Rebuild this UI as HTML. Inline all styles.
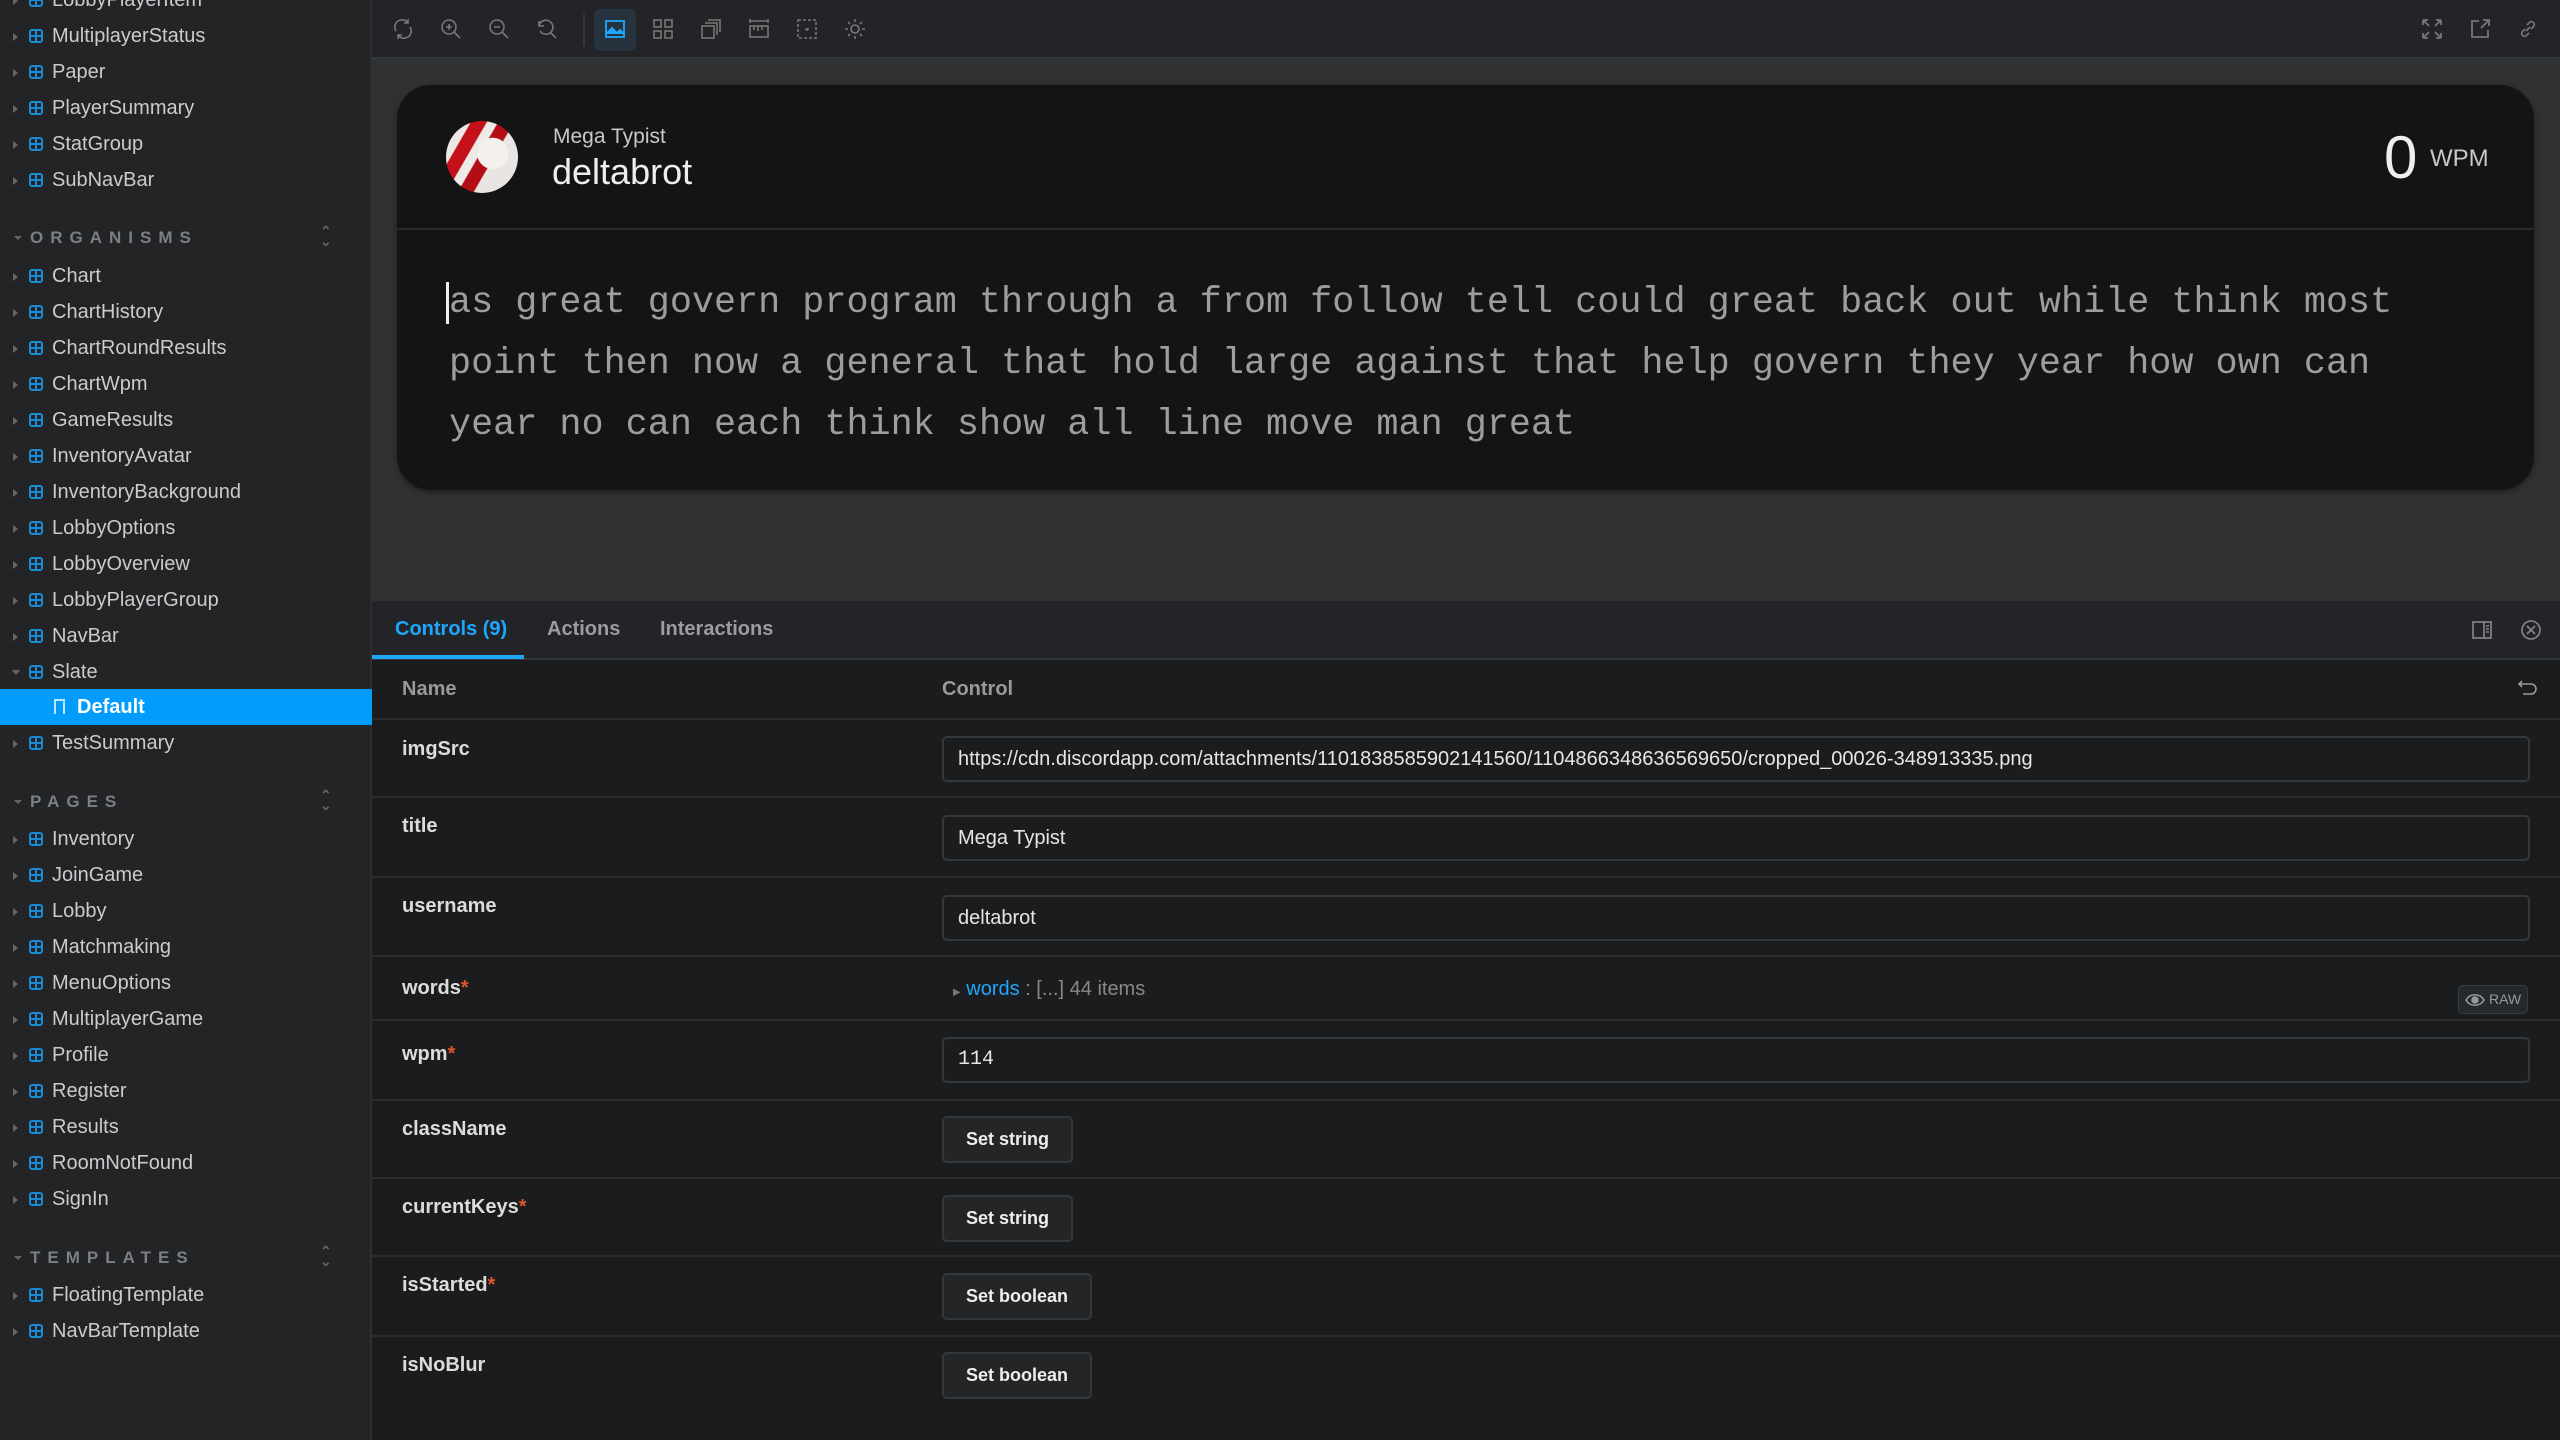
<!DOCTYPE html>
<html><head><meta charset="utf-8"><style>
*{box-sizing:border-box;margin:0;padding:0}
body{width:2560px;height:1440px;overflow:hidden;background:#1b1c1d;font-family:"Liberation Sans",sans-serif;position:relative}
.sb{position:absolute;left:0;top:0;width:372px;height:1440px;background:#222426;border-right:2px solid #2b2d30}
.it{position:absolute;left:0;width:372px;height:36px;line-height:36px;color:#c9cbcd;font-size:20px}
.it .ar{position:absolute;left:13px;top:15px;width:0;height:0;border-left:5px solid #666;border-top:4px solid transparent;border-bottom:4px solid transparent}
.it .ic{position:absolute;left:29px;top:11px;width:14px;height:14px;border:2px solid #1a8ad4;border-radius:3px}
.it .ic:before{content:"";position:absolute;left:4px;top:-2px;width:2px;height:14px;background:#1a8ad4}
.it .ic:after{content:"";position:absolute;top:4px;left:-2px;height:2px;width:14px;background:#1a8ad4}
.it span{position:absolute;left:52px}
.sec{position:absolute;left:30px;font-size:17px;font-weight:bold;letter-spacing:7px;color:#7c7f83}
.sec:before{content:"";position:absolute;left:-16px;top:8px;border-top:4px solid #666;border-left:4px solid transparent;border-right:4px solid transparent}
.sec i{position:absolute;left:290px;top:-2px;color:#666;font-style:normal;font-size:14px;letter-spacing:0;line-height:10px}
.tb{position:absolute;left:372px;top:0;width:2188px;height:59px;background:#222428;border-bottom:2px solid #33363a}
.ti{position:absolute;top:18px;width:22px;height:22px}
.pv{position:absolute;left:372px;top:59px;width:2188px;height:542px;background:#303132}
.card{position:absolute;left:397px;top:85px;width:2137px;height:405px;background:#141414;border-radius:34px;box-shadow:0 2px 6px rgba(0,0,0,.4)}
.tabs{position:absolute;left:372px;top:601px;width:2188px;height:59px;background:#222428;border-bottom:2px solid #33363a;font-size:20px}
.tab{position:absolute;top:17px;color:#9a9c9f;font-weight:bold}
.row{position:absolute;left:372px;width:2188px;border-bottom:2px solid #2a2c2e}
.lb{position:absolute;left:30px;font-size:20px;font-weight:bold;color:#dcdcdc}
.lb b{color:#e0552e}
.inp{position:absolute;left:942px;width:1588px;height:46px;border:2px solid #35383b;border-radius:5px;background:#1b1c1d;color:#e6e6e6;font-size:20px;line-height:42px;padding-left:14px}
.btn{position:absolute;left:942px;height:47px;border:2px solid #35383b;border-radius:5px;background:#232527;color:#eee;font-weight:bold;font-size:18px;line-height:43px;padding:0 22px}
</style></head><body>
<div class="sb">
<div class="it" style="top:-18px"><i class="ar"></i><i class="ic"></i><span>LobbyPlayerItem</span></div>
<div class="it" style="top:18px"><i class="ar"></i><i class="ic"></i><span>MultiplayerStatus</span></div>
<div class="it" style="top:54px"><i class="ar"></i><i class="ic"></i><span>Paper</span></div>
<div class="it" style="top:90px"><i class="ar"></i><i class="ic"></i><span>PlayerSummary</span></div>
<div class="it" style="top:126px"><i class="ar"></i><i class="ic"></i><span>StatGroup</span></div>
<div class="it" style="top:162px"><i class="ar"></i><i class="ic"></i><span>SubNavBar</span></div>
<div class="sec" style="top:228px">ORGANISMS<i>⌃<br>⌄</i></div>
<div class="it" style="top:258px"><i class="ar"></i><i class="ic"></i><span>Chart</span></div>
<div class="it" style="top:294px"><i class="ar"></i><i class="ic"></i><span>ChartHistory</span></div>
<div class="it" style="top:330px"><i class="ar"></i><i class="ic"></i><span>ChartRoundResults</span></div>
<div class="it" style="top:366px"><i class="ar"></i><i class="ic"></i><span>ChartWpm</span></div>
<div class="it" style="top:402px"><i class="ar"></i><i class="ic"></i><span>GameResults</span></div>
<div class="it" style="top:438px"><i class="ar"></i><i class="ic"></i><span>InventoryAvatar</span></div>
<div class="it" style="top:474px"><i class="ar"></i><i class="ic"></i><span>InventoryBackground</span></div>
<div class="it" style="top:510px"><i class="ar"></i><i class="ic"></i><span>LobbyOptions</span></div>
<div class="it" style="top:546px"><i class="ar"></i><i class="ic"></i><span>LobbyOverview</span></div>
<div class="it" style="top:582px"><i class="ar"></i><i class="ic"></i><span>LobbyPlayerGroup</span></div>
<div class="it" style="top:618px"><i class="ar"></i><i class="ic"></i><span>NavBar</span></div>
<div class="it" style="top:654px"><i class="ar" style="border:none;border-top:5px solid #666;border-left:4px solid transparent;border-right:4px solid transparent;top:16px;left:12px"></i><i class="ic"></i><span>Slate</span></div>
<div class="it" style="top:689px;background:#029cfd;color:#fff;font-weight:bold"><i style="position:absolute;left:54px;top:10px;width:11px;height:15px;border:2px solid #bfe6ff;border-bottom:none"></i><span style="left:77px">Default</span></div>
<div class="it" style="top:725px"><i class="ar"></i><i class="ic"></i><span>TestSummary</span></div>
<div class="sec" style="top:792px">PAGES<i>⌃<br>⌄</i></div>
<div class="it" style="top:821px"><i class="ar"></i><i class="ic"></i><span>Inventory</span></div>
<div class="it" style="top:857px"><i class="ar"></i><i class="ic"></i><span>JoinGame</span></div>
<div class="it" style="top:893px"><i class="ar"></i><i class="ic"></i><span>Lobby</span></div>
<div class="it" style="top:929px"><i class="ar"></i><i class="ic"></i><span>Matchmaking</span></div>
<div class="it" style="top:965px"><i class="ar"></i><i class="ic"></i><span>MenuOptions</span></div>
<div class="it" style="top:1001px"><i class="ar"></i><i class="ic"></i><span>MultiplayerGame</span></div>
<div class="it" style="top:1037px"><i class="ar"></i><i class="ic"></i><span>Profile</span></div>
<div class="it" style="top:1073px"><i class="ar"></i><i class="ic"></i><span>Register</span></div>
<div class="it" style="top:1109px"><i class="ar"></i><i class="ic"></i><span>Results</span></div>
<div class="it" style="top:1145px"><i class="ar"></i><i class="ic"></i><span>RoomNotFound</span></div>
<div class="it" style="top:1181px"><i class="ar"></i><i class="ic"></i><span>SignIn</span></div>
<div class="sec" style="top:1248px">TEMPLATES<i>⌃<br>⌄</i></div>
<div class="it" style="top:1277px"><i class="ar"></i><i class="ic"></i><span>FloatingTemplate</span></div>
<div class="it" style="top:1313px"><i class="ar"></i><i class="ic"></i><span>NavBarTemplate</span></div>
</div>

<div class="tb">
<svg class="ti" style="left:20px" viewBox="0 0 22 22" fill="none" stroke="#777" stroke-width="1.6"><path d="M4 13A7 7 0 0 1 16 5M18 9A7 7 0 0 1 6 17M16 1v4h-4M6 21v-4h4"/></svg>
<svg class="ti" style="left:68px" viewBox="0 0 22 22" fill="none" stroke="#777" stroke-width="1.6"><circle cx="9" cy="9" r="7"/><path d="M14 14l6 6M6 9h6M9 6v6"/></svg>
<svg class="ti" style="left:116px" viewBox="0 0 22 22" fill="none" stroke="#777" stroke-width="1.6"><circle cx="9" cy="9" r="7"/><path d="M14 14l6 6M6 9h6"/></svg>
<svg class="ti" style="left:164px" viewBox="0 0 22 22" fill="none" stroke="#777" stroke-width="1.6"><path d="M3 8A7 7 0 1 1 4 13M3 3v5h5M14 14l6 6"/></svg>
<div style="position:absolute;left:211px;top:14px;width:2px;height:32px;background:#33363a"></div>
<div style="position:absolute;left:222px;top:9px;width:42px;height:42px;border-radius:6px;background:#26323d"></div>
<svg class="ti" style="left:232px" viewBox="0 0 22 22" fill="none" stroke="#1ea7fd" stroke-width="1.8"><rect x="2" y="3" width="18" height="16"/><path d="M2 16l6-6 5 5 3-3 4 4" fill="#1ea7fd"/></svg>
<svg class="ti" style="left:280px" viewBox="0 0 22 22" fill="none" stroke="#777" stroke-width="1.6"><rect x="2" y="2" width="7" height="7"/><rect x="13" y="2" width="7" height="7"/><rect x="2" y="13" width="7" height="7"/><rect x="13" y="13" width="7" height="7"/></svg>
<svg class="ti" style="left:328px" viewBox="0 0 22 22" fill="none" stroke="#777" stroke-width="1.6"><rect x="2" y="8" width="12" height="12"/><path d="M5 5h12v12M8 2h12v12"/></svg>
<svg class="ti" style="left:376px" viewBox="0 0 22 22" fill="none" stroke="#777" stroke-width="1.6"><path d="M2 3h18M2 1v4M20 1v4"/><rect x="2" y="8" width="18" height="11"/><path d="M6 8v4M10 8v5M14 8v4"/></svg>
<svg class="ti" style="left:424px" viewBox="0 0 22 22" fill="none" stroke="#777" stroke-width="1.6" stroke-dasharray="3 2"><rect x="2" y="2" width="18" height="18"/><circle cx="11" cy="11" r="1" fill="#777"/></svg>
<svg class="ti" style="left:472px" viewBox="0 0 22 22" fill="none" stroke="#777" stroke-width="1.6"><circle cx="11" cy="11" r="4"/><path d="M11 1v3M11 18v3M1 11h3M18 11h3M4 4l2 2M16 16l2 2M4 18l2-2M16 6l2-2"/></svg>
<svg class="ti" style="left:2049px" viewBox="0 0 22 22" fill="none" stroke="#777" stroke-width="1.8"><path d="M2 2l6 6M20 2l-6 6M2 20l6-6M20 20l-6-6M2 2h5M2 2v5M20 2h-5M20 2v5M2 20h5M2 20v-5M20 20h-5M20 20v-5"/></svg>
<svg class="ti" style="left:2097px" viewBox="0 0 22 22" fill="none" stroke="#777" stroke-width="1.8"><path d="M10 3H3v16h16v-7M12 10l8-8M14 2h6v6"/></svg>
<svg class="ti" style="left:2145px" viewBox="0 0 22 22" fill="none" stroke="#777" stroke-width="1.6"><path d="M9 13l4-4M8 11l-3 3a3 3 0 0 0 4 4l3-3M14 11l3-3a3 3 0 0 0-4-4l-3 3"/></svg>
</div>

<div class="pv">
<div class="card" style="left:25px;top:26px">
<div style="position:absolute;left:49px;top:36px;width:72px;height:72px;border-radius:50%;background:radial-gradient(circle at 65% 45%,#f3f0ee 0 25%,transparent 26%),linear-gradient(120deg,#ece8e6 0 22%,#c4101a 23% 36%,#eeeae8 37% 46%,#b30d16 47% 60%,#e9e5e3 61%)"></div>
<div style="position:absolute;left:156px;top:40px;color:#c8c8c8;font-size:21px">Mega Typist</div>
<div style="position:absolute;left:155px;top:66px;color:#eee;font-size:36px">deltabrot</div>
<div style="position:absolute;left:1987px;top:38px;color:#eee;font-size:60px;line-height:70px">0</div>
<div style="position:absolute;left:2033px;top:60px;color:#c8c8c8;font-size:24px">WPM</div>
<div style="position:absolute;left:0;top:143px;width:2137px;height:2px;background:#2a2a2a"></div>
<div style="position:absolute;left:52px;top:188px;width:1960px;color:#9d9d9d;font-family:'Liberation Mono',monospace;font-size:36.8px;line-height:61px;white-space:pre"><span style="border-left:3px solid #eee;margin-left:-3px"></span>as great govern program through a from follow tell could great back out while think most
point then now a general that hold large against that help govern they year how own can
year no can each think show all line move man great</div>
</div>
</div>

<div class="tabs">
<div class="tab" style="left:23px;color:#1ea7fd">Controls (9)</div>
<div class="tab" style="left:175px">Actions</div>
<div class="tab" style="left:288px">Interactions</div>
<div style="position:absolute;left:0;top:54px;width:152px;height:4px;background:#1ea7fd"></div>
<svg style="position:absolute;left:2100px;top:19px" width="20" height="20" viewBox="0 0 20 20" fill="none" stroke="#888" stroke-width="1.6"><rect x="1" y="2" width="18" height="16"/><path d="M12 2v16M14 6h3M14 9h3M14 12h3"/></svg>
<svg style="position:absolute;left:2148px;top:18px" width="22" height="22" viewBox="0 0 22 22" fill="none" stroke="#888" stroke-width="1.6"><circle cx="11" cy="11" r="9"/><path d="M7 7l8 8M15 7l-8 8"/></svg>
</div>

<div class="row" style="top:660px;height:60px">
<div style="position:absolute;left:30px;top:18px;font-size:20px;font-weight:bold;color:#999">Name</div>
<div style="position:absolute;left:570px;top:18px;font-size:20px;font-weight:bold;color:#999">Control</div>
<svg style="position:absolute;left:2145px;top:18px" width="22" height="20" viewBox="0 0 22 20" fill="none" stroke="#999" stroke-width="1.6"><path d="M5 3L2 6l3 3M2 6h12a5 5 0 0 1 0 10H6"/></svg>
</div>
<div class="row" style="top:720px;height:78px"><div class="lb" style="top:18px">imgSrc</div></div>
<div class="inp" style="top:736px">https://cdn.discordapp.com/attachments/1101838585902141560/1104866348636569650/cropped_00026-348913335.png</div>
<div class="row" style="top:798px;height:80px"><div class="lb" style="top:17px">title</div></div>
<div class="inp" style="top:815px">Mega Typist</div>
<div class="row" style="top:878px;height:79px"><div class="lb" style="top:17px">username</div></div>
<div class="inp" style="top:895px">deltabrot</div>
<div class="row" style="top:957px;height:64px"><div class="lb" style="top:20px">words<b>*</b></div>
<div style="position:absolute;left:581px;top:21px;font-size:20px;color:#888"><span style="font-size:10px;color:#777">▶</span> <span style="color:#1ea7fd">words</span> : [...] 44 items</div>
<div style="position:absolute;left:2086px;top:28px;width:70px;height:29px;border:1px solid #3a3d40;border-radius:5px;background:#26292c;color:#999;font-size:14px;line-height:27px;padding-left:30px">RAW<svg style="position:absolute;left:6px;top:7px" width="20" height="14" viewBox="0 0 20 14" fill="none" stroke="#999" stroke-width="1.5"><path d="M1 7C5 0 15 0 19 7 15 14 5 14 1 7z"/><circle cx="10" cy="7" r="3" fill="#999"/></svg></div>
</div>
<div class="row" style="top:1021px;height:80px"><div class="lb" style="top:22px">wpm<b>*</b></div></div>
<div class="inp" style="top:1037px;font-family:'Liberation Mono',monospace">114</div>
<div class="row" style="top:1101px;height:78px"><div class="lb" style="top:17px">className</div></div>
<div class="btn" style="top:1116px">Set string</div>
<div class="row" style="top:1179px;height:78px"><div class="lb" style="top:17px">currentKeys<b>*</b></div></div>
<div class="btn" style="top:1195px">Set string</div>
<div class="row" style="top:1257px;height:80px"><div class="lb" style="top:17px">isStarted<b>*</b></div></div>
<div class="btn" style="top:1273px">Set boolean</div>
<div class="row" style="top:1337px;height:103px;border:none"><div class="lb" style="top:17px">isNoBlur</div></div>
<div class="btn" style="top:1352px">Set boolean</div>
</body></html>
